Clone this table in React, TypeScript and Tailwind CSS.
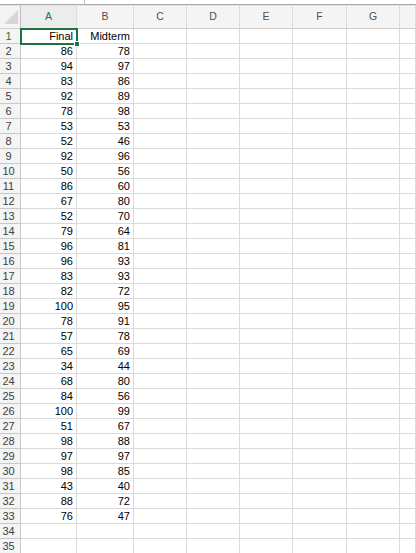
const finals = [86, 94, 83, 92, 78, 53, 52, 92, 50, 86, 67, 52, 79, 96, 96, 83, 82, 100, 78, 57, 65, 34, 68, 84, 100, 51, 98, 97, 98, 43, 88, 76];
const midterms = [78, 97, 86, 89, 98, 53, 46, 96, 56, 60, 80, 70, 64, 81, 93, 93, 72, 95, 91, 78, 69, 44, 80, 56, 99, 67, 88, 97, 85, 40, 72, 47];

const cols = ["A", "B", "C", "D", "E", "F", "G", ""];
const gridCols = "grid grid-cols-[21px_56px_57px_53px_53px_53px_54px_53px_1fr]";

export default function App() {
  const rows: (string | number)[][] = [["Final", "Midterm"]];
  finals.forEach((f, i) => rows.push([f, midterms[i]]));
  rows.push(["", ""], ["", ""]);

  return (
    <div
      className="w-[416px] h-[553px] overflow-hidden bg-white relative"
      style={{ fontFamily: '"Liberation Sans", Arial, sans-serif' }}
    >
      {/* formula bar remnant */}
      <div className="h-[4px] relative">
        <div className="absolute left-[84px] top-0 w-px h-[4px] bg-[#c4c4c4]"></div>
      </div>
      <div className="h-px bg-[#a9a9a9]"></div>
      <div className="h-px bg-[#e2e2e2]"></div>

      {/* Column headers */}
      <div className={`${gridCols} h-[23px] bg-[#f4f4f4] border-b border-[#cfcfcf]`}>
        <div className="border-r border-[#bdbdbd] flex items-end justify-end pr-[1px] pb-[3px]">
          <svg width="16" height="16" viewBox="0 0 16 16">
            <polygon points="1,15 15,15 15,1" fill="#d6d6d6" />
          </svg>
        </div>
        {cols.map((c, i) => (
          <div
            key={i}
            className={`flex items-center justify-center text-[10.5px] border-r border-[#dcdcdc] ${
              c === "A" ? "text-[#217346] bg-[#ececec]" : "text-[#505050]"
            }`}
          >
            {c}
          </div>
        ))}
      </div>

      {/* Rows */}
      {rows.map((r, i) => (
        <div key={i} className={`${gridCols} h-[15px] text-[11px] leading-[14px]`}>
          <div
            className={`bg-[#f4f4f4] border-r border-b border-[#c8c8c8] text-[11px] text-center pr-[3px] ${
              i === 0 ? "text-[#217346]" : "text-[#404040]"
            }`}
          >
            {i + 1}
          </div>
          <div className="border-r border-b border-[#dadada] text-right pr-[3px] text-black">{r[0]}</div>
          <div className="border-r border-b border-[#dadada] text-right pr-[3px] text-black">{r[1]}</div>
          {[0, 1, 2, 3, 4, 5].map((k) => (
            <div key={k} className="border-r border-b border-[#dadada]"></div>
          ))}
        </div>
      ))}

      {/* Selection of A1 */}
      <div className="absolute left-[20px] top-[28px] w-[58px] h-[17px] border-2 border-[#1e7145]"></div>
      <div className="absolute left-[74px] top-[41px] w-[6px] h-[6px] bg-[#1e7145] border border-white"></div>
    </div>
  );
}
